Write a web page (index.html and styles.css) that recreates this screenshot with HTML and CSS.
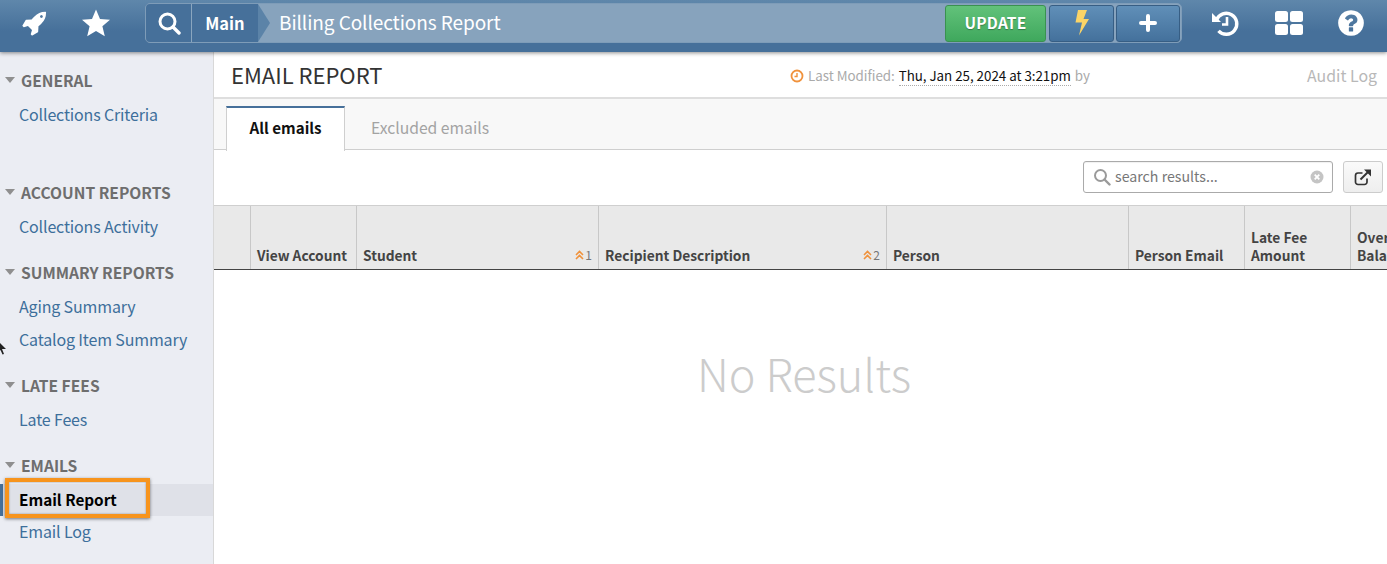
FILE: index.html
```html
<!DOCTYPE html>
<html lang="en">
<head>
<meta charset="utf-8">
<title>Email Report</title>
<link rel="stylesheet" href="styles.css">
</head>
<body>
<header class="topbar">
  <div class="quick">
    <span class="quick-icon"><svg class="rocket" width="26" height="26" viewBox="0 0 1792 1792"><path fill="#fff" d="M1504 448q0-40-28-68t-68-28-68 28-28 68 28 68 68 28 68-28 28-68zm224-288q0 249-75.5 430.5t-253.5 360.5q-81 80-195 176l-20 379q-2 16-16 26l-384 224q-7 4-16 4-12 0-23-9l-64-64q-13-14-8-32l85-276-281-281-276 85q-3 1-9 1-14 0-23-9l-64-64q-17-19-5-39l224-384q10-14 26-16l379-20q96-114 176-195 188-187 358-258t431-71q14 0 24 9.500t10 22.500z"/></svg></span>
    <span class="quick-icon"><svg width="30" height="30" viewBox="0 0 30 30"><polygon fill="#fff" points="15,1.500 19,11 29,11.800 21.400,18.300 23.800,28.200 15,23 6.200,28.200 8.600,18.300 1,11.800 11,11"/></svg></span>
  </div>
  <div class="crumbs">
    <div class="crumb-search"><svg width="24" height="24" viewBox="0 0 24 24"><circle cx="10.500" cy="10.500" r="7.500" fill="none" stroke="#fff" stroke-width="3"/><path d="M16 16l6 6" stroke="#fff" stroke-width="3.400" stroke-linecap="round"/></svg></div>
    <div class="crumb-main">Main<span class="crumb-arrow"></span></div>
    <div class="crumb-title">Billing Collections Report</div>
    <div class="actions">
      <button class="btn-update">UPDATE</button>
      <button class="btn-blue"><svg width="16" height="26" viewBox="0 0 16 26"><polygon fill="#fbd467" points="4,0 13,0 9.500,9 15,9 5,25.500 8,12.500 1.500,12.500"/></svg></button>
      <button class="btn-blue btn-plus"><svg width="18" height="18" viewBox="0 0 18 18"><path d="M9 2v14M2 9h14" stroke="#fff" stroke-width="4" stroke-linecap="round"/></svg></button>
    </div>
  </div>
  <div class="tools">
    <svg width="30" height="30" viewBox="0 0 30 30"><path d="M5.500 12A10.500 10.500 0 1 1 7.500 22.800" fill="none" stroke="#fff" stroke-width="3.400"/><polygon fill="#fff" points="1,5 10,14 1,14"/><path d="M16 9v7.500h-5" fill="none" stroke="#fff" stroke-width="2.600"/></svg>
    <svg width="30" height="26" viewBox="0 0 30 26"><g fill="#fff"><rect x="1" y="1" width="13" height="11" rx="2.500"/><rect x="16" y="1" width="13" height="11" rx="2.500"/><rect x="1" y="14" width="13" height="11" rx="2.500"/><rect x="16" y="14" width="13" height="11" rx="2.500"/></g></svg>
    <svg width="30" height="30" viewBox="0 0 1792 1792"><path fill="#fff" d="M1024 1376v-192q0-14-9-23t-23-9h-192q-14 0-23 9t-9 23v192q0 14 9 23t23 9h192q14 0 23-9t9-23zm256-672q0-88-55.500-163t-138.500-116-170-41q-243 0-371 213-15 24 8 42l132 100q7 6 19 6 16 0 25-12 53-68 86-92 34-24 86-24 48 0 85.500 26t37.500 59q0 38-20 61t-68 45q-63 28-115.500 86.500t-52.500 125.500v36q0 14 9 23t23 9h192q14 0 23-9t9-23q0-19 21.500-49.500t54.500-49.500q32-18 49-28.500t46-35 44.500-48 28-60.500 12.500-81zm384 192q0 209-103 385.500t-279.500 279.500-385.500 103-385.500-103-279.500-279.500-103-385.500 103-385.500 279.500-279.500 385.500-103 385.500 103 279.500 279.500 103 385.500z"/></svg>
  </div>
</header>
<div class="body">
  <nav class="sidebar">
    <section class="group group-spaced">
      <h3 class="group-title"><span class="caret"></span>GENERAL</h3>
      <a class="link">Collections Criteria</a>
    </section>
    <section class="group">
      <h3 class="group-title"><span class="caret"></span>ACCOUNT REPORTS</h3>
      <a class="link">Collections Activity</a>
    </section>
    <section class="group">
      <h3 class="group-title"><span class="caret"></span>SUMMARY REPORTS</h3>
      <a class="link">Aging Summary</a>
      <a class="link">Catalog Item Summary</a>
    </section>
    <section class="group">
      <h3 class="group-title"><span class="caret"></span>LATE FEES</h3>
      <a class="link">Late Fees</a>
    </section>
    <section class="group">
      <h3 class="group-title"><span class="caret"></span>EMAILS</h3>
      <a class="link link-active">Email Report<span class="highlight"></span></a>
      <a class="link link-after">Email Log</a>
    </section>
    <svg class="cursor" width="8" height="14" viewBox="0 0 8 14"><path d="M-2 0l8 8H2l2 5-1.500.5L.5 9-2 11z" fill="#222"/></svg>
  </nav>
  <main class="content">
    <div class="title-row">
      <h1 class="title">EMAIL REPORT</h1>
      <div class="modified">
        <svg width="14" height="14" viewBox="0 0 14 14"><circle cx="7" cy="7" r="5.500" fill="none" stroke="#f0923c" stroke-width="1.800"/><path d="M7 4v3.500H4.500" fill="none" stroke="#f0923c" stroke-width="1.400"/></svg>
        <span class="mod-label">Last Modified:</span>
        <span class="mod-date">Thu, Jan 25, 2024 at 3:21pm</span>
        <span class="mod-label">by</span>
      </div>
      <a class="audit">Audit Log</a>
    </div>
    <div class="tabs">
      <a class="tab tab-active">All emails</a>
      <a class="tab">Excluded emails</a>
    </div>
    <div class="toolbar">
      <div class="search">
        <svg width="18" height="18" viewBox="0 0 18 18"><circle cx="7.500" cy="7.500" r="5.500" fill="none" stroke="#9a9a9a" stroke-width="2"/><path d="M11.500 11.500l5 5" stroke="#9a9a9a" stroke-width="2.400" stroke-linecap="round"/></svg>
        <span class="search-text">search results...</span>
        <svg width="14" height="14" viewBox="0 0 14 14"><circle cx="7" cy="7" r="6.500" fill="#c4c4c4"/><path d="M4.700 4.700l4.600 4.600M9.300 4.700l-4.600 4.600" stroke="#fff" stroke-width="1.800"/></svg>
      </div>
      <button class="export"><svg width="18" height="17" viewBox="0 0 18 17"><path d="M13 9.500V13a2.500 2.500 0 0 1-2.500 2.500H4A2.500 2.500 0 0 1 1.500 13V6.500A2.500 2.500 0 0 1 4 4h4.500" fill="none" stroke="#333" stroke-width="1.700"/><path d="M6.500 10.500L14.500 2.500" stroke="#333" stroke-width="2"/><polygon fill="#333" points="10,0.500 17,0.500 17,7.500"/></svg></button>
    </div>
    <table class="grid">
      <colgroup>
        <col class="c0"><col class="c1"><col class="c2"><col class="c3"><col class="c4"><col class="c5"><col class="c6"><col class="c7">
      </colgroup>
      <thead>
        <tr>
          <th></th>
          <th>View Account</th>
          <th><span class="th-sort">Student<span class="sort"><svg width="9" height="10" viewBox="0 0 9 10"><path d="M1 5l3.500-3.500L8 5M1 9l3.500-3.500L8 9" fill="none" stroke="#f0923c" stroke-width="1.600"/></svg>1</span></span></th>
          <th><span class="th-sort">Recipient Description<span class="sort"><svg width="9" height="10" viewBox="0 0 9 10"><path d="M1 5l3.500-3.500L8 5M1 9l3.500-3.500L8 9" fill="none" stroke="#f0923c" stroke-width="1.600"/></svg>2</span></span></th>
          <th>Person</th>
          <th>Person Email</th>
          <th>Late Fee<br>Amount</th>
          <th>Overdue<br>Balance</th>
        </tr>
      </thead>
    </table>
    <div class="empty">No Results</div>
  </main>
</div>
</body>
</html>
```
FILE: styles.css
```css
* { box-sizing: border-box; }
html, body { margin: 0; height: 100%; overflow: hidden; }
body {
  font-family: "Noto Sans CJK SC", "Noto Sans", sans-serif;
  font-size: 16px;
  line-height: 20px;
  background: #fff;
  color: #333;
}
button { font-family: inherit; cursor: pointer; padding: 0; }

.topbar {
  height: 52px;
  display: flex;
  align-items: flex-start;
  background: linear-gradient(#5f87ab, #46709a 60%);
  box-shadow: 0 1px 4px rgba(0, 0, 0, .45);
  position: relative;
  z-index: 2;
}
.quick { width: 145px; height: 46px; display: flex; padding-left: 4px; }
.quick-icon { width: 61px; height: 46px; display: flex; align-items: center; justify-content: center; }
.rocket { margin-right: 2px; }

.crumbs {
  width: 1037px;
  height: 40px;
  margin-top: 3px;
  display: flex;
  align-items: center;
  background: #87a3bd;
  border: 1px solid #7e9cb8;
  border-radius: 5px;
  position: relative;
}
.crumb-search {
  width: 46px;
  height: 38px;
  background: #46709a;
  border-right: 1px solid #8aa6bf;
  border-radius: 4px 0 0 4px;
  display: flex;
  align-items: center;
  justify-content: center;
}
.crumb-main {
  width: 66px;
  height: 38px;
  background: #46709a;
  color: #fff;
  font-weight: 700;
  font-size: 16.500px;
  line-height: 38px;
  text-align: center;
  position: relative;
}
.crumb-arrow {
  position: absolute;
  left: 100%;
  top: 0;
  border-left: 12px solid #5b83a8;
  border-top: 19px solid transparent;
  border-bottom: 19px solid transparent;
}
.crumb-title { margin-left: 21px; color: #fff; font-size: 19px; letter-spacing: -.08px; line-height: 36px; height: 38px; flex: 1; }
.actions { display: flex; align-items: center; gap: 2px; height: 38px; padding-right: 1px; margin-left: auto; }
.btn-update {
  width: 101px;
  height: 37px;
  padding-bottom: 3px;
  margin-right: 1px;
  border: 1px solid #3a9150;
  border-radius: 3px;
  background: linear-gradient(#62c27a, #3fa85d);
  color: #fff;
  font-weight: 700;
  font-size: 15.500px;
  letter-spacing: .2px;
  line-height: 30px;
  text-shadow: 0 1px 1px rgba(0, 0, 0, .3);
}
.btn-blue {
  width: 65px;
  height: 37px;
  border: 1px solid #375e84;
  border-radius: 3px;
  background: linear-gradient(#608fb8, #44719c);
  display: flex;
  align-items: center;
  justify-content: center;
}
.btn-plus { width: 64px; }
.tools { flex: 1; display: flex; justify-content: space-between; align-items: center; height: 46px; padding: 0 21px 0 29px; }

.body { display: flex; height: 512px; }
.sidebar {
  width: 214px;
  flex: none;
  background: #ebedf3;
  border-right: 1px solid #d8d8d8;
  padding-top: 11px;
  position: relative;
}
.group { margin-bottom: 12px; }
.group-spaced { padding-bottom: 32px; }
.group-title {
  margin: 0;
  height: 35px;
  padding: 0 0 1px 5px;
  line-height: 34px;
  font-size: 15.600px;
  font-weight: 700;
  color: #6e6e6e;
  display: flex;
  align-items: center;
}
.caret {
  width: 0;
  height: 0;
  margin-right: 6px;
  border-top: 6px solid #8f8f8f;
  border-left: 5px solid transparent;
  border-right: 5px solid transparent;
}
.link {
  display: block;
  height: 33px;
  line-height: 33px;
  padding-left: 19px;
  color: #3d6f9b;
  font-size: 16px;
  letter-spacing: -.15px;
  position: relative;
}
.link-active {
  height: 32px;
  margin-top: 1px;
  line-height: 31px;
  background: #dfe1e8;
  color: #000;
  font-weight: 700;
  font-size: 15.300px;
  letter-spacing: 0;
  box-shadow: inset 3px 0 0 #46709a;
}
.link-after { line-height: 31px; }
.highlight {
  position: absolute;
  left: 5px;
  top: -6px;
  width: 145px;
  height: 40px;
  border: 4px solid #f7941d;
  box-shadow: 0 1px 3px rgba(0, 0, 0, .5), inset 0 0 2px rgba(0, 0, 0, .4);
}
.cursor { position: absolute; left: 0; top: 289px; }

.content { flex: 1; min-width: 0; overflow: hidden; }
.title-row {
  height: 47px;
  display: flex;
  align-items: center;
  border-bottom: 2px solid #dedede;
  padding: 0 10px 0 17px;
}
.title { margin: 0 0 2px; width: 558px; font-size: 22px; font-weight: 400; color: #333; line-height: 30px; }
.modified { display: flex; align-items: center; gap: 4px; margin-top: 3px; margin-left: 1px; font-size: 13.350px; letter-spacing: -.02px; }
.mod-label { color: #aaa; }
.mod-date { color: #111; border-bottom: 1px dotted #aaa; line-height: 18px; margin-top: 1px; }
.audit { margin-left: auto; margin-top: 3px; color: #b8b8b8; font-size: 15.900px; }

.tabs {
  height: 51px;
  padding: 7px 0 0 12px;
  display: flex;
  background: #f8f8f8;
  border-bottom: 1px solid #cfcfcf;
}
.tab { width: 119px; height: 45px; font-size: 15.700px; line-height: 43px; text-align: center; color: #a3a3a3; }
.tab + .tab { width: 170px; }
.tab-active {
  background: #fff;
  color: #111;
  font-weight: 700;
  border: 1px solid #cfcfcf;
  border-top: 2px solid #46709a;
  border-bottom: 0;
  font-size: 15.200px;
  line-height: 39px;
}
.toolbar { height: 55px; display: flex; justify-content: flex-end; align-items: flex-start; gap: 10px; padding: 11px 4px 0 0; }
.search {
  width: 250px;
  height: 32px;
  display: flex;
  align-items: center;
  gap: 4px;
  padding: 0 8px 0 9px;
  border: 1px solid #aaa;
  border-radius: 3px;
  background: #fff;
  box-shadow: inset 0 1px 1px rgba(0, 0, 0, .06);
}
.search-text { flex: 1; color: #777; font-size: 14.200px; line-height: 18px; margin-bottom: 2px; }
.export {
  width: 40px;
  height: 32px;
  background: linear-gradient(#fafafa, #eee);
  border: 1px solid #ccc;
  border-radius: 3px;
  display: flex;
  align-items: center;
  justify-content: center;
}

.grid { border-collapse: collapse; table-layout: fixed; width: 1173px; height: 65px; }
.c0 { width: 36px; } .c1 { width: 106px; } .c2 { width: 242px; } .c3 { width: 288px; }
.c4 { width: 242px; } .c5 { width: 116px; } .c6 { width: 106px; } .c7 { width: 37px; }
.grid th {
  background: #e9e9e9;
  border-top: 1px solid #cfcfcf;
  border-left: 1px solid #c8c8c8;
  border-bottom: 1px solid #444;
  vertical-align: bottom;
  text-align: left;
  padding: 0 0 5px 6.500px;
  font-size: 13.750px;
  line-height: 18px;
  font-weight: 700;
  color: #444;
  white-space: nowrap;
  overflow: hidden;
}
.grid th:first-child { border-left: 0; }
.th-sort { display: flex; justify-content: space-between; align-items: center; padding-right: 5.500px; }
.sort { display: flex; align-items: center; gap: 1px; font-size: 12px; font-weight: 400; color: #777; }
.empty { margin-top: 75px; text-align: center; font-size: 45px; line-height: 56px; font-weight: 300; color: #ccc; padding-left: 7px; }
```
